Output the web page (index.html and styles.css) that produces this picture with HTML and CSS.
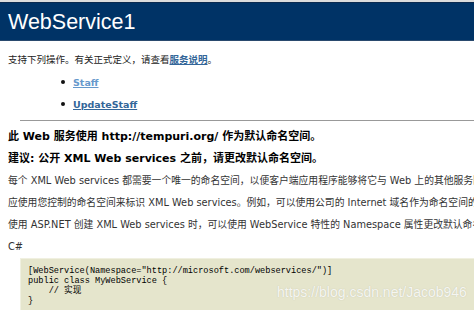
FILE: index.html
```html
<!DOCTYPE html>
<html lang="zh-CN">
<head>
<meta charset="utf-8">
<title>WebService1 Web 服务</title>
<link rel="stylesheet" href="styles.css">
</head>
<body>
<header class="banner"><span class="title">WebService1</span></header>
<main class="content">
  <p class="intro">支持下列操作。有关正式定义，请查看<a class="link" href="#">服务说明</a>。</p>
  <ul class="ops">
    <li class="op"><a class="link visited" href="#">Staff</a></li>
    <li class="op"><a class="link" href="#">UpdateStaff</a></li>
  </ul>
  <hr class="rule">
  <p class="notice">此 Web 服务使用 http://tempuri.org/ 作为默认命名空间。</p>
  <p class="notice">建议: 公开 XML Web services 之前，请更改默认命名空间。</p>
  <p class="para">每个 XML Web services 都需要一个唯一的命名空间，以便客户端应用程序能够将它与 Web 上的其他服务区分开来。</p>
  <p class="para">应使用您控制的命名空间来标识 XML Web services。例如，可以使用公司的 Internet 域名作为命名空间的一部分。</p>
  <p class="para">使用 ASP.NET 创建 XML Web services 时，可以使用 WebService 特性的 Namespace 属性更改默认命名空间。</p>
  <p class="lang">C#</p>
  <pre class="code">[WebService(Namespace="http://microsoft.com/webservices/")]
public class MyWebService {
    // 实现
}</pre>
</main>
<div class="watermark">https://blog.csdn.net/Jacob946</div>
</body>
</html>
```
FILE: styles.css
```css
html, body {
  margin: 0;
  padding: 0;
  overflow: hidden;
  background: #ffffff;
}
body {
  position: relative;
  width: 474px;
  height: 310px;
  font-family: "DejaVu Sans", "Noto Sans CJK SC", sans-serif;
  color: #000;
}
.banner {
  box-sizing: border-box;
  height: 41px;
  border-top: 2px solid #dcdcdc;
  border-bottom: 1px solid #2a4a6e;
  background: #003366;
  box-shadow: inset 0 1px 0 #0b2a4f;
  padding: 8px 0 0 8px;
}
.title {
  display: block;
  font-family: "Liberation Sans", Arial, sans-serif;
  font-size: 21.5px;
  line-height: 25px;
  color: #ffffff;
  white-space: nowrap;
}
.content {
  display: flex;
  flex-direction: column;
}
.intro, .para, .notice, .lang {
  margin: 0;
  padding-left: 8px;
  line-height: 22px;
  white-space: nowrap;
  overflow: hidden;
}
.intro {
  margin-top: 8px;
  font-size: 9.5px;
  color: #222;
}
.link {
  color: #336699;
  font-weight: bold;
  text-decoration: underline;
}
.link.visited {
  color: #6699cc;
}
.ops {
  list-style: none;
  margin: 0;
  padding: 0;
}
.op {
  display: flex;
  align-items: center;
  height: 22px;
  padding-left: 61px;
  font-size: 9.5px;
}
.op::before {
  content: "";
  width: 4px;
  height: 4px;
  border-radius: 50%;
  background: #111;
  margin-right: 8px;
}
.rule {
  margin: 5px 0 0 20px;
  height: 0;
  border: 0;
  border-top: 1px solid #999;
}
.notice {
  font-size: 11px;
  font-weight: bold;
}
.rule + .notice {
  margin-top: 5px;
}
.para {
  font-size: 9.8px;
  color: #333;
}
.lang {
  font-size: 9.8px;
  color: #333;
}
.code {
  margin: 0 0 0 20px;
  padding: 7px 0 6px 7px;
  background: #e5e5cc;
  border: 1px solid #f0f0e0;
  border-right: 0;
  font-family: "Liberation Mono", "Noto Sans CJK SC", monospace;
  font-size: 8.6px;
  line-height: 10px;
  color: #000;
  white-space: pre;
}
.watermark {
  position: absolute;
  left: 277px;
  top: 283px;
  font-family: "Liberation Sans", Arial, sans-serif;
  font-size: 14px;
  line-height: 18px;
  color: rgba(255, 255, 255, 0.85);
  text-shadow: 0 0 1px rgba(120, 120, 100, 0.35);
  white-space: nowrap;
}
```
